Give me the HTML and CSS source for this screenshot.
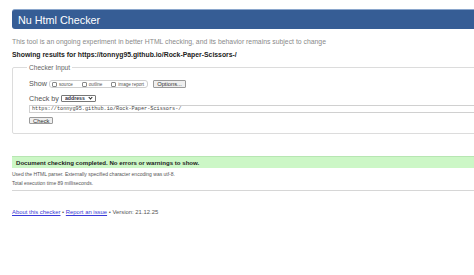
FILE: index.html
```html
<!DOCTYPE html>
<html lang="en">
<head>
    <meta charset="UTF-8">
    <meta name="viewport" content="width=device-width, initial-scale=1.0">
    <title>Nu Html Checker</title>
    <link rel="stylesheet" href="styles.css">
</head>
<body>
    <div class="page">
        <h1 class="banner">Nu Html Checker</h1>
        <p class="intro">This tool is an ongoing experiment in better HTML checking, and its behavior remains subject to change</p>
        <p class="showing">Showing results for https://tonnyg95.github.io/Rock-Paper-Scissors-/</p>

        <form class="checker-form">
            <fieldset class="checker">
                <legend>Checker Input</legend>

                <div class="row">
                    <span class="label">Show</span>
                    <span class="options">
                        <label><input type="checkbox">source</label>
                        <label><input type="checkbox">outline</label>
                        <label><input type="checkbox">image report</label>
                    </span>
                    <button type="button" class="btn">Options...</button>
                </div>

                <div class="row row-by">
                    <span class="label">Check by</span>
                    <span class="select-wrap">
                        <select class="select">
                            <option>address</option>
                        </select>
                    </span>
                </div>

                <input type="text" class="url" value="https://tonnyg95.github.io/Rock-Paper-Scissors-/">

                <div class="row row-check">
                    <button type="button" class="btn">Check</button>
                </div>
            </fieldset>
        </form>

        <p class="success">Document checking completed. No errors or warnings to show.</p>
        <p class="meta">Used the HTML parser. Externally specified character encoding was utf-8.</p>
        <p class="meta">Total execution time 89 milliseconds.</p>
        <hr class="rule">

        <p class="footer">
            <a href="#">About this checker</a> • <a href="#">Report an issue</a> • Version: 21.12.25
        </p>
    </div>
</body>
</html>
```

FILE: styles.css
```css
:root {
    --blue: #365d95;
    --line: #dcdcdc;
    --text: #222;
    --muted: #8a8a8a;
}

html, body {
    overflow: hidden;
}

body {
    margin: 0;
    font-family: "Liberation Sans", Arial, sans-serif;
    color: var(--text);
    background: #fff;
}

.page {
    width: 540px;
    padding: 9px 0 0 12px;
}

.banner {
    margin: 0;
    height: 20px;
    padding: 0 6px;
    line-height: 20px;
    font-size: 10.8px;
    font-weight: normal;
    color: #fff;
    background: var(--blue);
    border-top: 1px solid #8aa6cc;
    box-sizing: border-box;
    border-radius: 3px 0 0 3px;
}

.intro {
    margin: 8px 0 0;
    font-size: 6.85px;
    line-height: 9px;
    color: var(--muted);
}

.showing {
    margin: 3.5px 0 0;
    font-size: 6.85px;
    line-height: 9px;
    font-weight: bold;
}

.checker-form {
    margin: 4px 0 0;
}

.checker {
    margin: 0;
    padding: 0 0 9px 16px;
    border: 1px solid var(--line);
    border-radius: 2px;
}

.checker legend {
    padding: 0 2px;
    margin-left: -2px;
    font-size: 6.6px;
    line-height: 9px;
    color: #666;
}

.row {
    display: flex;
    align-items: center;
    height: 8px;
    margin-top: 8.5px;
    font-size: 0;
}

.row-by {
    height: 7px;
    margin-top: 7px;
}

.row-check {
    height: 7px;
    margin-top: 4px;
}

.label {
    font-size: 7.2px;
    line-height: 8px;
    color: #555;
    margin-right: 2px;
}

.options {
    display: flex;
    align-items: center;
    gap: 9px;
    height: 8px;
    padding: 0 3px 0 2px;
    border: 1px solid #cfcfcf;
    border-radius: 3px;
    box-sizing: border-box;
}

.options label {
    display: flex;
    align-items: center;
    font-size: 4.6px;
    color: #555;
}

.options input {
    appearance: none;
    width: 5px;
    height: 5px;
    margin: 0 2px 0 0;
    border: 1px solid #8a8a8a;
    border-radius: 1px;
    box-sizing: border-box;
    background: #fff;
}

.btn {
    height: 8px;
    margin-left: 5px;
    padding: 0 3px;
    font-family: inherit;
    font-size: 5.8px;
    line-height: 6px;
    color: #333;
    background: #efefef;
    border: 1px solid #9a9a9a;
    border-radius: 1px;
    box-sizing: border-box;
}

.row-check .btn {
    margin-left: 0;
    height: 7.5px;
}

.select-wrap {
    position: relative;
    display: flex;
    height: 7px;
}

.select {
    display: block;
    appearance: none;
    width: 35px;
    height: 7px;
    margin: 0;
    padding: 0 0 0 3px;
    font-family: inherit;
    font-size: 5.2px;
    font-weight: bold;
    line-height: 5px;
    color: #334;
    background: #fff;
    border: 1px solid #777;
    border-radius: 1px;
    box-sizing: border-box;
}

.select-wrap::after {
    content: "";
    position: absolute;
    right: 4px;
    top: 1px;
    width: 2px;
    height: 2px;
    border-right: 1px solid #222;
    border-bottom: 1px solid #222;
    transform: rotate(45deg);
}

.url {
    display: block;
    width: 500px;
    height: 8px;
    margin: 3px 0 0;
    padding: 0 2px;
    font-family: "Liberation Mono", "Courier New", monospace;
    font-size: 5.2px;
    color: #444;
    border: 1px solid #d0d0d0;
    box-sizing: border-box;
    outline: none;
}

.success {
    margin: 22px 0 0;
    height: 12px;
    padding: 0 4px;
    line-height: 12px;
    font-size: 6.1px;
    font-weight: bold;
    background: #ccf7c6;
    border-top: 1px solid #b7e6b2;
    box-sizing: border-box;
}

.meta {
    margin: 1.5px 0 0;
    font-size: 5px;
    line-height: 8px;
    color: #555;
}

.rule {
    margin: 3px 0 0;
    border: none;
    border-top: 1px solid #d6d6d6;
}

.footer {
    margin: 17px 0 0;
    font-size: 5.9px;
    line-height: 9px;
    color: #555;
}

.footer a {
    color: #3838d6;
}
```
